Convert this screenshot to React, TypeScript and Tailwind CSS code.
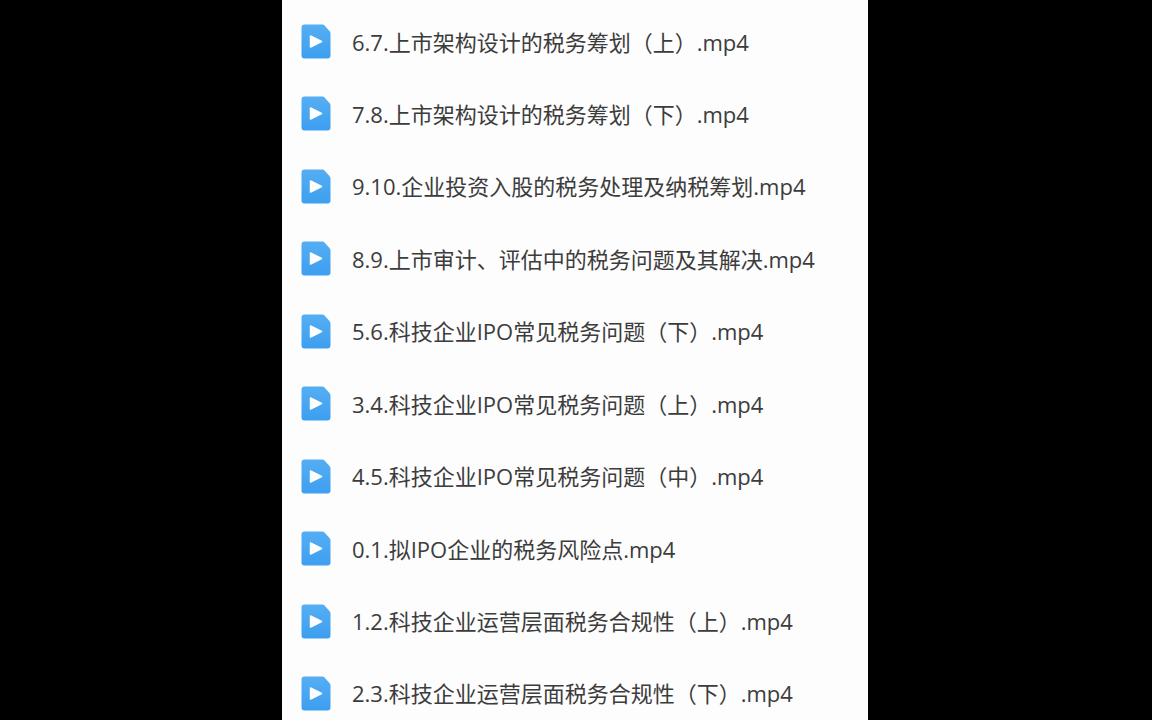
const FILES = [
  '6.7.上市架构设计的税务筹划（上）.mp4',
  '7.8.上市架构设计的税务筹划（下）.mp4',
  '9.10.企业投资入股的税务处理及纳税筹划.mp4',
  '8.9.上市审计、评估中的税务问题及其解决.mp4',
  '5.6.科技企业IPO常见税务问题（下）.mp4',
  '3.4.科技企业IPO常见税务问题（上）.mp4',
  '4.5.科技企业IPO常见税务问题（中）.mp4',
  '0.1.拟IPO企业的税务风险点.mp4',
  '1.2.科技企业运营层面税务合规性（上）.mp4',
  '2.3.科技企业运营层面税务合规性（下）.mp4',
]

function VideoIcon() {
  return (
    <svg viewBox="0 0 30 35" className="w-[30px] h-[35px] shrink-0" aria-hidden="true">
      <defs>
        <linearGradient id="sheet" x1="0" y1="0" x2="0" y2="1">
          <stop offset="0" stopColor="#55aef3" />
          <stop offset="1" stopColor="#3d9ff0" />
        </linearGradient>
      </defs>
      <path
        d="M3.5 .5H21.5Q22.7 .5 23.5 1.5L28.5 7Q29.5 8.2 29.5 9.5V31.5Q29.5 34.5 26.5 34.5H3.5Q.5 34.5 .5 31.5V3.5Q.5 .5 3.5 .5Z"
        fill="url(#sheet)"
      />
      <path
        d="M9.5 12V23L20.5 17.5Z"
        fill="#fff"
        stroke="#fff"
        strokeWidth="1.5"
        strokeLinejoin="round"
      />
    </svg>
  )
}

export default function App() {
  return (
    <div className="min-h-screen bg-black grid grid-cols-[282fr_586fr_284fr]">
      <ul className="col-start-2 min-w-0 bg-[#fdfdfd] flex flex-col justify-between pt-6 pb-[9px] pl-[19px]">
        {FILES.map((name) => (
          <li key={name} className="flex items-center gap-[21px]">
            <VideoIcon />
            <span className="font-['Open_Sans','Noto_Sans_CJK_SC',sans-serif] text-[22px] leading-[34px] text-[#3c3c3c] whitespace-nowrap">
              {name}
            </span>
          </li>
        ))}
      </ul>
    </div>
  )
}
